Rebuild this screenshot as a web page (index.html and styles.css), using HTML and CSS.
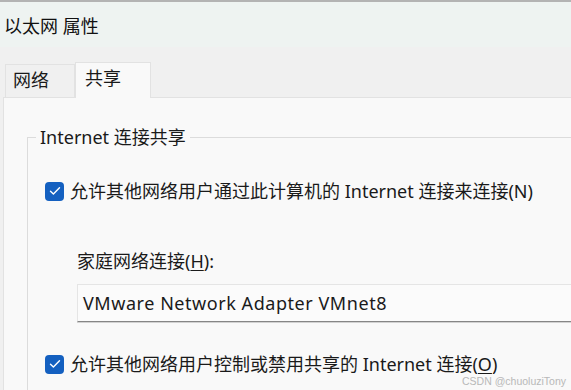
FILE: index.html
```html
<!DOCTYPE html>
<html lang="zh-CN">
  <head>
    <meta charset="UTF-8" />
    <title>以太网 属性</title>
    <link rel="stylesheet" href="styles.css">
  </head>
  <body>
    <div class="topline"></div>
    <div class="titlebar">以太网 属性</div>
    <div class="tabs">
      <div class="tab">网络</div>
      <div class="tab selected">共享</div>
    </div>
    <div class="panel">
      <fieldset class="group">
        <legend>Internet 连接共享</legend>
        <div class="check-row first">
          <div class="checkbox">
            <svg width="12" height="10" viewBox="0 0 12 10"><path d="M1.5 5.2 L4.4 8 L10.5 1.8" fill="none" stroke="#fff" stroke-width="1.4" stroke-linecap="round" stroke-linejoin="round"/></svg>
          </div>
          <span>允许其他网络用户通过此计算机的 Internet 连接来连接(N)</span>
        </div>
        <div class="field-label">家庭网络连接(<u>H</u>):</div>
        <div class="combo">VMware Network Adapter VMnet8</div>
        <div class="check-row second">
          <div class="checkbox">
            <svg width="12" height="10" viewBox="0 0 12 10"><path d="M1.5 5.2 L4.4 8 L10.5 1.8" fill="none" stroke="#fff" stroke-width="1.4" stroke-linecap="round" stroke-linejoin="round"/></svg>
          </div>
          <span>允许其他网络用户控制或禁用共享的 Internet 连接(<u>O</u>)</span>
        </div>
      </fieldset>
    </div>
    <div class="watermark">CSDN @chuoluziTony</div>
  </body>
</html>
```

FILE: styles.css
```css
body {
  margin: 0;
  width: 571px;
  height: 390px;
  overflow: hidden;
  position: relative;
  background-color: #f0f0f0;
  font-family: "Noto Sans", "Noto Sans CJK SC", sans-serif;
  font-size: 18px;
  color: #1a1a1a;
}
.topline {
  height: 2px;
  background-color: #b3b3b3;
}
.titlebar {
  height: 45px;
  display: flex;
  align-items: center;
  padding-left: 4px;
  background-color: #eef3f1;
  font-size: 18px;
  color: #111;
}
.tabs {
  height: 50px;
  display: flex;
  align-items: flex-end;
  padding-left: 5px;
}
.tab {
  box-sizing: border-box;
  width: 70px;
  height: 33px;
  padding-left: 7px;
  line-height: 31px;
  border: 1px solid #e2e2e2;
  border-bottom: none;
  background-color: #f0f0f0;
}
.tab.selected {
  width: 76px;
  height: 36px;
  padding-left: 9px;
  line-height: 31px;
  margin-bottom: -1px;
  background-color: #f9f9f9;
  position: relative;
}
.panel {
  margin-left: 3px;
  width: 700px;
  height: 300px;
  border-top: 1px solid #e2e2e2;
  border-left: 1px solid #e2e2e2;
  background-color: #f9f9f9;
  padding-top: 28px;
}
.group {
  margin: 0 0 0 23px;
  padding: 0;
  width: 660px;
  height: 320px;
  border: 1px solid #dcdcdc;
}
.group legend {
  margin-left: 8px;
  padding: 0 4px;
  line-height: 22px;
}
.check-row {
  display: flex;
  align-items: center;
  height: 24px;
  line-height: 20px;
  padding-left: 17px;
}
.check-row.first {
  margin-top: 31px;
}
.check-row.second {
  margin-top: 30px;
}
.checkbox {
  width: 19px;
  height: 19px;
  margin-right: 6px;
  border-radius: 4px;
  background-color: #1460c0;
  display: flex;
  align-items: center;
  justify-content: center;
}
.field-label {
  margin-top: 46px;
  margin-left: 49px;
  line-height: 24px;
}
.combo {
  box-sizing: border-box;
  margin-top: 11px;
  margin-left: 49px;
  height: 38px;
  padding-left: 5px;
  line-height: 36px;
  letter-spacing: 0.55px;
  background-color: #fbfbfb;
  border: 1px solid #e5e5e5;
  border-bottom: 1px solid #868686;
  box-shadow: 0 1px 0 #d2d2d2;
}
u {
  text-underline-offset: 2px;
}
.watermark {
  position: absolute;
  right: 5px;
  bottom: 3px;
  line-height: 11px;
  font-family: "Liberation Sans", sans-serif;
  font-size: 10.5px;
  color: #b8b8b8;
}
```
